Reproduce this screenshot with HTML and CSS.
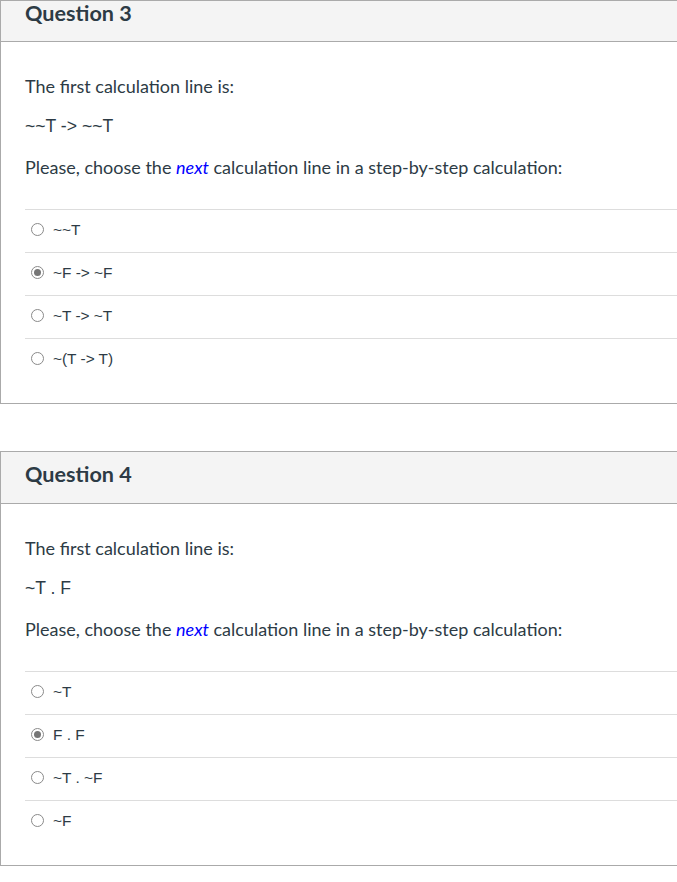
FILE: index.html
```html
<!DOCTYPE html>
<html lang="en">
<head>
  <meta charset="UTF-8" /><meta name="viewport" content="width=device-width,initial-scale=1">
  <title>Quiz</title>
  <link rel="stylesheet" href="styles.css">
</head>
<body>
  <div class="question is-cut">
    <div class="header"><h2>Question 3</h2></div>
    <div class="text">
      <p>The first calculation line is:</p>
      <p class="formula">~~T -&gt; ~~T</p>
      <p>Please, choose the <em class="hl">next</em> calculation line in a step-by-step calculation:</p>
      <div class="answers">
        <label class="answer"><span class="radio"></span>~~T</label>
        <label class="answer"><span class="radio checked"></span>~F -&gt; ~F</label>
        <label class="answer"><span class="radio"></span>~T -&gt; ~T</label>
        <label class="answer"><span class="radio"></span>~(T -&gt; T)</label>
      </div>
    </div>
  </div>

  <div class="question">
    <div class="header"><h2>Question 4</h2></div>
    <div class="text">
      <p>The first calculation line is:</p>
      <p class="formula">~T . F</p>
      <p>Please, choose the <em class="hl">next</em> calculation line in a step-by-step calculation:</p>
      <div class="answers">
        <label class="answer"><span class="radio"></span>~T</label>
        <label class="answer"><span class="radio checked"></span>F . F</label>
        <label class="answer"><span class="radio"></span>~T . ~F</label>
        <label class="answer"><span class="radio"></span>~F</label>
      </div>
    </div>
  </div>
</body>
</html>
```

FILE: styles.css
```css
* { box-sizing: border-box; }
html, body { overflow-x: hidden; }
body {
  margin: 0;
  background: #fff;
  color: #2d3b45;
  font-family: Lato, "Open Sans", sans-serif;
}
.question {
  border: 1px solid #aaa;
  margin: 0 -30px 47px 0;
}
.header {
  background: #f4f4f4;
  border-bottom: 1px solid #aaa;
  padding: 10px 24px 17px;
}
.header h2 {
  margin: 0;
  font-size: 21.6px;
  line-height: 24px;
  font-weight: 700;
  color: #2d3b45;
}
.is-cut .header { padding-top: 0; padding-bottom: 16px; }
.text { padding: 17px 24px 22px; }
.text p {
  margin: 13.5px 0;
  font-size: 18px;
  line-height: 27px;
}
.text .formula {
  font-family: "Liberation Sans", Arial, sans-serif;
  font-size: 17.6px;
}
.hl { color: #0000ff; }
.answers { margin-top: 28.5px; }
.answer {
  display: flex;
  align-items: center;
  gap: 9px;
  height: 43px;
  border-top: 1px solid #ddd;
  padding: 0 0 3px 6px;
  font-family: "Liberation Sans", Arial, sans-serif;
  font-size: 15.4px;
  color: #2d3b45;
}
.radio {
  width: 13px; height: 13px;
  border: 1px solid #8a8a8a;
  border-radius: 50%;
  flex: none;
  position: relative;
  background: #fff;
}
.radio.checked::after {
  content: '';
  position: absolute;
  top: 2px; left: 2px;
  width: 7px; height: 7px;
  border-radius: 50%;
  background: #767676;
}
```
